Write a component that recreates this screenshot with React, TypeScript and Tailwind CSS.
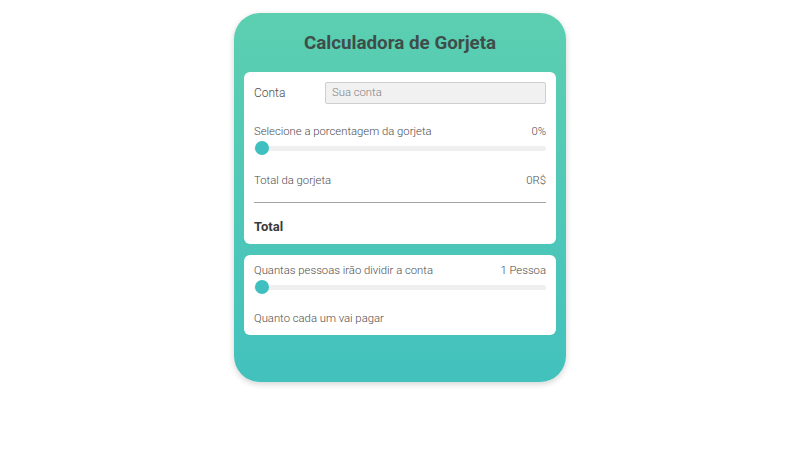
import React from "react";

function Slider() {
  return (
    <div className="relative mt-px h-[14px] w-full">
      <div className="absolute left-0 right-0 top-[5px] h-[5px] rounded-full bg-[#efefef]" />
      <div className="absolute left-[1px] top-0 h-[14px] w-[14px] rounded-full bg-[#3fbfc0]" />
    </div>
  );
}

export default function App() {
  return (
    <div className="flex min-h-[450px] w-full justify-center bg-white pt-[13px]" style={{ fontFamily: "Roboto, 'Liberation Sans', sans-serif" }}>
      <div className="flex h-[369px] w-[332px] flex-col rounded-[26px] bg-gradient-to-b from-[#5ccfb0] to-[#42c1bd] px-[10px] pt-[18px] shadow-[0_2px_6px_rgba(0,0,0,0.18)]">
        <h1 className="mb-[17px] text-center text-[18.8px] font-bold leading-[24px] text-[#3e4d4a]">Calculadora de Gorjeta</h1>

        <div className="flex flex-col rounded-[6px] bg-white px-[10px] pt-[10px] pb-[9px] text-[11.3px] font-light leading-[16px] text-[#4d4d4d]">
          <div className="flex h-[22px] items-center">
            <span className="w-[71px] text-[12px]">Conta</span>
            <div className="flex h-[22px] flex-1 items-center rounded-[2px] border border-[#cfcfcf] bg-[#f1f1f1] px-[6px] text-[11.3px] text-[#808080]">Sua conta</div>
          </div>
          <div className="mt-[20px] flex justify-between">
            <span>Selecione a porcentagem da gorjeta</span>
            <span>0%</span>
          </div>
          <Slider />
          <div className="mt-[18px] flex justify-between">
            <span>Total da gorjeta</span>
            <span>0R$</span>
          </div>
          <div className="mt-[13px] h-px bg-[#a5a5a5]" />
          <div className="mt-[16px] text-[13px] font-bold text-[#3a3a3a]">Total</div>
        </div>

        <div className="mt-[11px] flex flex-col rounded-[6px] bg-white px-[10px] pt-[8px] pb-[8px] text-[11.3px] font-light leading-[16px] text-[#4d4d4d]">
          <div className="flex justify-between">
            <span>Quantas pessoas irão dividir a conta</span>
            <span>1 Pessoa</span>
          </div>
          <Slider />
          <div className="mt-[17px]">Quanto cada um vai pagar</div>
        </div>
      </div>
    </div>
  );
}
